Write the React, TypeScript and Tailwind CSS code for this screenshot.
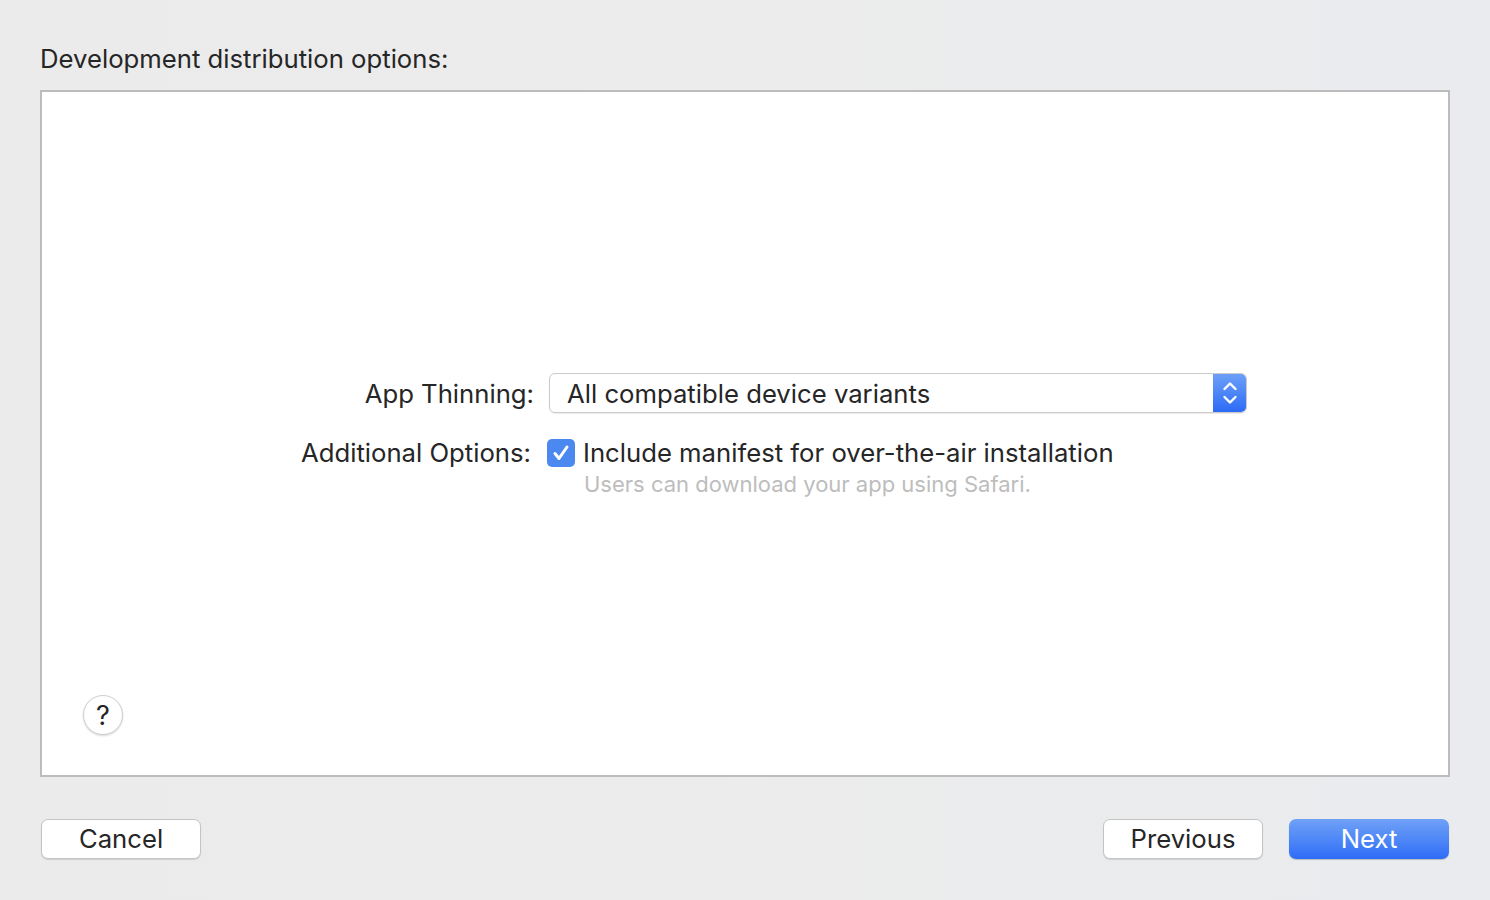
import React from "react";

const font = { fontFamily: "Inter, 'Noto Sans', sans-serif" };

function PushButton({ label, primary }: { label: string; primary?: boolean }) {
  return (
    <button
      className={`w-[160px] h-[40px] rounded-[7px] text-[25.7px] leading-none flex items-center justify-center ${
        primary
          ? "bg-gradient-to-b from-[#70a1f7] to-[#2e6cf6] text-white shadow-[0_1px_1px_rgba(0,0,0,0.2)]"
          : "bg-white text-[#262626] border border-[#c4c4c4] shadow-[0_1px_1px_rgba(0,0,0,0.12)]"
      }`}
    >
      {label}
    </button>
  );
}

export default function App() {
  return (
    <div
      style={font}
      className="w-[1490px] h-[900px] bg-gradient-to-r from-[#ebebeb] via-[#ececec] to-[#e9ebee] pl-10 pr-[41px] flex flex-col text-[#262626]"
    >
      <h1 className="pt-[43px] text-[25.7px] leading-[32px] h-[90px] pb-[15px]">
        Development distribution options:
      </h1>

      <div className="h-[687px] -mr-[1px] bg-white border-2 border-[#bcbcbc] flex flex-col">
        <div className="pt-[281px] grid grid-cols-[492px_1fr] gap-x-[15px]">
          <div className="text-[25.7px] h-[40px] pt-[3px] flex items-center justify-end">App Thinning:</div>
          <div className="w-[698px] h-[40px] rounded-[6px] border border-[#cacaca] shadow-[0_1px_1px_rgba(0,0,0,0.08)] flex overflow-hidden">
            <div className="flex-1 pl-[17px] pt-[3px] text-[25.7px] flex items-center">All compatible device variants</div>
            <div className="w-[33px] bg-gradient-to-b from-[#6d9ff8] to-[#2d6af5] flex flex-col items-center justify-center gap-[4px]">
              <svg width="16" height="10" viewBox="0 0 16 10" fill="none">
                <path d="M2.5 8 L8 2.5 L13.5 8" stroke="white" strokeWidth="2.4" strokeLinecap="round" strokeLinejoin="round" />
              </svg>
              <svg width="16" height="10" viewBox="0 0 16 10" fill="none">
                <path d="M2.5 2 L8 7.5 L13.5 2" stroke="white" strokeWidth="2.4" strokeLinecap="round" strokeLinejoin="round" />
              </svg>
            </div>
          </div>

          <div className="mt-[24px] text-[25.7px] h-[32px] pt-[1px] flex items-center justify-end pr-[3px]">Additional Options:</div>
          <div className="mt-[24px] -ml-[2px] flex flex-col">
            <div className="flex items-center h-[32px] gap-[8px]">
              <div className="w-[28px] h-[28px] rounded-[5px] bg-[#4b89f1] flex items-center justify-center">
                <svg width="20" height="18" viewBox="0 0 20 18" fill="none">
                  <path d="M4 9.5 L8 14.5 L16 3" stroke="white" strokeWidth="3" strokeLinecap="round" strokeLinejoin="round" />
                </svg>
              </div>
              <span className="text-[25.7px] pt-[1px]">Include manifest for over-the-air installation</span>
            </div>
            <div className="pl-[37px] text-[22px] leading-[30px] text-[#bdbdbd]">Users can download your app using Safari.</div>
          </div>
        </div>

        <div className="flex-1" />
        <div className="pl-[41px] pb-[40px]">
          <div className="w-[40px] h-[40px] rounded-full bg-white border border-[#cfcfcf] shadow-[0_1px_2px_rgba(0,0,0,0.15)] flex items-center justify-center text-[27px] leading-none">
            ?
          </div>
        </div>
      </div>

      <div className="pt-[42px] flex items-center">
        <div className="ml-[1px]">
          <PushButton label="Cancel" />
        </div>
        <div className="flex-1" />
        <PushButton label="Previous" />
        <div className="w-[26px]" />
        <PushButton label="Next" primary />
      </div>
    </div>
  );
}
